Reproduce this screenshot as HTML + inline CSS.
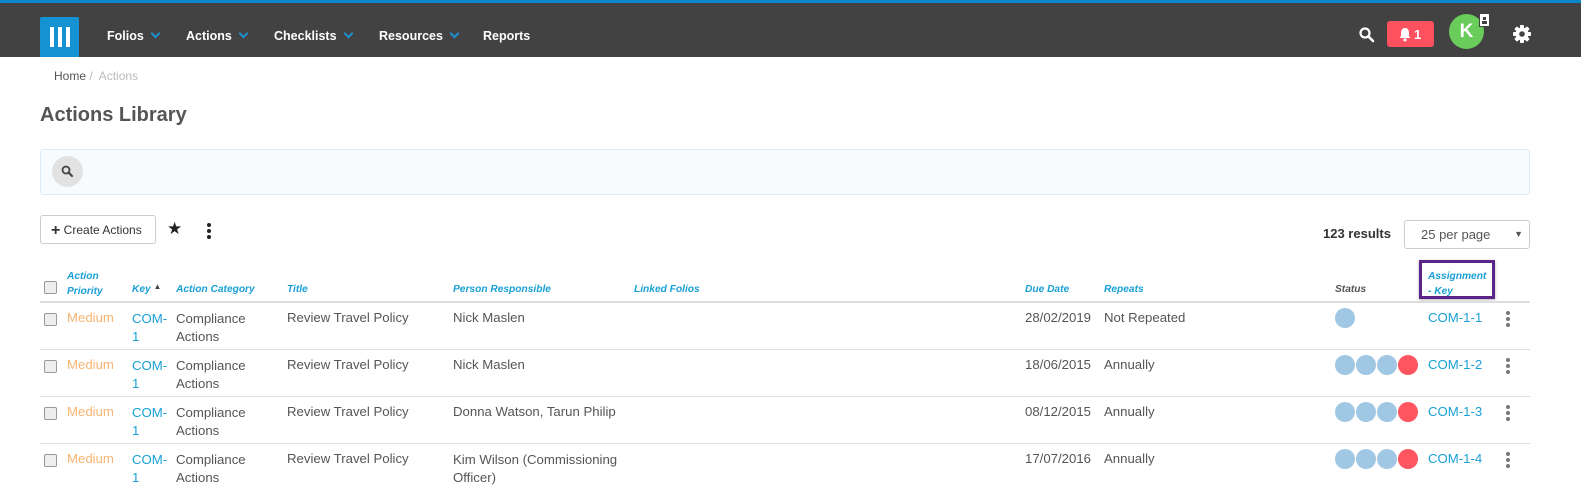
<!DOCTYPE html>
<html><head><meta charset="utf-8"><style>
*{box-sizing:border-box;margin:0;padding:0}
body{width:1581px;height:493px;overflow:hidden;background:#fff;font-family:"Liberation Sans",sans-serif;font-size:13px;color:#555;position:relative}
.a{position:absolute;white-space:nowrap}
.top{position:absolute;left:0;top:0;width:1581px;height:3px;background:#0a86c9}
.nav{position:absolute;left:0;top:3px;width:1581px;height:54px;background:#424242}
.logo{position:absolute;left:40px;top:17px;width:39px;height:40px;background:#1592d2;border-radius:2px 2px 0 0}
.logo i{position:absolute;top:10px;width:4px;height:20px;background:#fff}
.ni{color:#fff;font-weight:bold;font-size:12.5px;top:29px}
.chev{display:inline-block;width:7px;height:7px;border-right:2px solid #1e8fd0;border-bottom:2px solid #1e8fd0;transform:rotate(45deg);margin-left:8px;position:relative;top:-3px}
.h{color:#19a0d6;font-style:italic;font-weight:bold;font-size:10.2px}
.t{font-size:13.2px;color:#555}
.cb{position:absolute;left:44px;width:13px;height:13px;border:1px solid #999;border-radius:2px;background:#eee}
.line{position:absolute;left:40px;width:1490px;height:1px;background:#ddd}
.dot{position:absolute;width:20px;height:20px;border-radius:50%;background:#a0c7e4}
.red{background:#fe5561}
.kb{position:absolute;left:1506px;width:4px;height:4px;border-radius:50%;background:#777}
</style></head><body>
<div class="top"></div>
<div class="nav"></div>
<div class="logo"><i style="left:10px"></i><i style="left:18px"></i><i style="left:26px"></i></div>
<div class="a ni" style="left:107px">Folios<span class="chev"></span></div>
<div class="a ni" style="left:186px">Actions<span class="chev"></span></div>
<div class="a ni" style="left:274px">Checklists<span class="chev"></span></div>
<div class="a ni" style="left:379px">Resources<span class="chev"></span></div>
<div class="a ni" style="left:483px">Reports</div>
<svg class="a" style="left:1358px;top:26px" width="18" height="18" viewBox="0 0 18 18"><circle cx="7" cy="7" r="4.5" fill="none" stroke="#fff" stroke-width="2.2"/><line x1="10.5" y1="10.5" x2="15" y2="15" stroke="#fff" stroke-width="2.6" stroke-linecap="round"/></svg>
<div class="a" style="left:1387px;top:21px;width:47px;height:26px;background:#fd5160;border-radius:3px"></div>
<svg class="a" style="left:1398px;top:27px" width="14" height="15" viewBox="0 0 14 15"><path d="M7 1C4 1 3 3.5 3 6v3L1.5 11h11L11 9V6c0-2.5-1-5-4-5z" fill="#fff"/><circle cx="7" cy="12.8" r="1.6" fill="#fff"/></svg>
<div class="a" style="left:1414px;top:27px;color:#fff;font-weight:bold;font-size:13px">1</div>
<div class="a" style="left:1449px;top:14px;width:35px;height:35px;border-radius:50%;background:#6acd5b;color:#fff;font-weight:bold;font-size:19px;text-align:center;line-height:35px">K</div>
<div class="a" style="left:1479px;top:13px;width:11px;height:14px;background:#fff;border:1px solid #424242"><div style="position:absolute;left:3px;top:3px;width:3px;height:3px;background:#424242"></div><div style="position:absolute;left:2px;top:7px;width:5px;height:3px;background:#424242"></div></div>
<svg class="a" style="left:1512px;top:24px" width="20" height="20" viewBox="0 0 20 20"><g fill="#fff"><circle cx="10" cy="10" r="6.5"/><rect x="8" y="1" width="4" height="18" rx="1"/><rect x="8" y="1" width="4" height="18" rx="1" transform="rotate(45 10 10)"/><rect x="8" y="1" width="4" height="18" rx="1" transform="rotate(90 10 10)"/><rect x="8" y="1" width="4" height="18" rx="1" transform="rotate(135 10 10)"/></g><circle cx="10" cy="10" r="2.8" fill="#424242"/></svg>

<div class="a" style="left:54px;top:69px;font-size:12px;color:#555">Home <span style="color:#bbb">/&nbsp; Actions</span></div>
<div class="a" style="left:40px;top:104px;font-size:20px;font-weight:bold;color:#555">Actions Library</div>

<div class="a" style="left:40px;top:149px;width:1490px;height:46px;background:#f7fbfe;border:1px solid #dde9f4;border-radius:3px"></div>
<div class="a" style="left:52px;top:156px;width:31px;height:31px;border-radius:50%;background:#e2e2e2"></div>
<svg class="a" style="left:61px;top:165px" width="13" height="13" viewBox="0 0 13 13"><circle cx="5" cy="5" r="3.5" fill="none" stroke="#444" stroke-width="1.8"/><line x1="7.7" y1="7.7" x2="11" y2="11" stroke="#444" stroke-width="2.2" stroke-linecap="round"/></svg>

<div class="a" style="left:40px;top:215px;width:116px;height:29px;border:1px solid #ccc;border-radius:3px;font-size:12px;color:#333;line-height:27px;padding-left:10px"><b style="font-size:16px;position:relative;top:1px">+</b> Create Actions</div>
<div class="a" style="left:167px;top:219px;font-size:17px;color:#222">★</div>
<div class="a" style="left:207px;top:223px;width:4px;height:4px;border-radius:50%;background:#222"></div>
<div class="a" style="left:207px;top:229px;width:4px;height:4px;border-radius:50%;background:#222"></div>
<div class="a" style="left:207px;top:235px;width:4px;height:4px;border-radius:50%;background:#222"></div>
<div class="a" style="left:1323px;top:226px;font-size:13px;font-weight:bold;color:#333">123 results</div>
<div class="a" style="left:1404px;top:220px;width:126px;height:29px;border:1px solid #ccc;border-radius:3px;font-size:13px;color:#555;line-height:27px;padding-left:16px">25 per page<span style="position:absolute;right:6px;font-size:9px;color:#555">▼</span></div>

<div class="cb" style="top:281px"></div>
<div class="a h" style="left:67px;top:269px;line-height:15px">Action<br>Priority</div>
<div class="a h" style="left:132px;top:284px">Key <span style="font-style:normal;font-size:8px;color:#444;position:relative;top:-3px">▲</span></div>
<div class="a h" style="left:176px;top:284px">Action Category</div>
<div class="a h" style="left:287px;top:284px">Title</div>
<div class="a h" style="left:453px;top:284px">Person Responsible</div>
<div class="a h" style="left:634px;top:284px">Linked Folios</div>
<div class="a h" style="left:1025px;top:284px">Due Date</div>
<div class="a h" style="left:1104px;top:284px">Repeats</div>
<div class="a h" style="left:1335px;top:284px;color:#555">Status</div>
<div class="a" style="left:1419px;top:260px;width:76px;height:39px;border:3px solid #5b2587;box-shadow:0 1px 3px rgba(0,0,0,.3)"></div>
<div class="a h" style="left:1428px;top:269px;line-height:15px">Assignment<br>- Key</div>
<div class="line" style="top:301px;height:2px"></div>

<div class="line" style="top:349px"></div>
<div class="line" style="top:396px"></div>
<div class="line" style="top:443px"></div>

<div class="cb" style="top:313px"></div>
<div class="a t" style="left:67px;top:310px;color:#f8b472">Medium</div>
<div class="a t" style="left:132px;top:310px;color:#19a0d6;line-height:18px">COM-<br>1</div>
<div class="a t" style="left:176px;top:310px;line-height:18px">Compliance<br>Actions</div>
<div class="a t" style="left:287px;top:310px">Review Travel Policy</div>
<div class="a t" style="left:453px;top:310px">Nick Maslen</div>
<div class="a t" style="left:1025px;top:310px">28/02/2019</div>
<div class="a t" style="left:1104px;top:310px">Not Repeated</div>
<div class="dot" style="left:1335px;top:308px"></div>
<div class="a t" style="left:1428px;top:310px;color:#19a0d6">COM-1-1</div>
<div class="kb" style="top:311px"></div><div class="kb" style="top:317px"></div><div class="kb" style="top:323px"></div>

<div class="cb" style="top:360px"></div>
<div class="a t" style="left:67px;top:357px;color:#f8b472">Medium</div>
<div class="a t" style="left:132px;top:357px;color:#19a0d6;line-height:18px">COM-<br>1</div>
<div class="a t" style="left:176px;top:357px;line-height:18px">Compliance<br>Actions</div>
<div class="a t" style="left:287px;top:357px">Review Travel Policy</div>
<div class="a t" style="left:453px;top:357px">Nick Maslen</div>
<div class="a t" style="left:1025px;top:357px">18/06/2015</div>
<div class="a t" style="left:1104px;top:357px">Annually</div>
<div class="dot" style="left:1335px;top:355px"></div><div class="dot" style="left:1356px;top:355px"></div><div class="dot" style="left:1377px;top:355px"></div><div class="dot red" style="left:1398px;top:355px"></div>
<div class="a t" style="left:1428px;top:357px;color:#19a0d6">COM-1-2</div>
<div class="kb" style="top:358px"></div><div class="kb" style="top:364px"></div><div class="kb" style="top:370px"></div>

<div class="cb" style="top:407px"></div>
<div class="a t" style="left:67px;top:404px;color:#f8b472">Medium</div>
<div class="a t" style="left:132px;top:404px;color:#19a0d6;line-height:18px">COM-<br>1</div>
<div class="a t" style="left:176px;top:404px;line-height:18px">Compliance<br>Actions</div>
<div class="a t" style="left:287px;top:404px">Review Travel Policy</div>
<div class="a t" style="left:453px;top:404px">Donna Watson, Tarun Philip</div>
<div class="a t" style="left:1025px;top:404px">08/12/2015</div>
<div class="a t" style="left:1104px;top:404px">Annually</div>
<div class="dot" style="left:1335px;top:402px"></div><div class="dot" style="left:1356px;top:402px"></div><div class="dot" style="left:1377px;top:402px"></div><div class="dot red" style="left:1398px;top:402px"></div>
<div class="a t" style="left:1428px;top:404px;color:#19a0d6">COM-1-3</div>
<div class="kb" style="top:405px"></div><div class="kb" style="top:411px"></div><div class="kb" style="top:417px"></div>

<div class="cb" style="top:454px"></div>
<div class="a t" style="left:67px;top:451px;color:#f8b472">Medium</div>
<div class="a t" style="left:132px;top:451px;color:#19a0d6;line-height:18px">COM-<br>1</div>
<div class="a t" style="left:176px;top:451px;line-height:18px">Compliance<br>Actions</div>
<div class="a t" style="left:287px;top:451px">Review Travel Policy</div>
<div class="a t" style="left:453px;top:451px;line-height:18px">Kim Wilson (Commissioning<br>Officer)</div>
<div class="a t" style="left:1025px;top:451px">17/07/2016</div>
<div class="a t" style="left:1104px;top:451px">Annually</div>
<div class="dot" style="left:1335px;top:449px"></div><div class="dot" style="left:1356px;top:449px"></div><div class="dot" style="left:1377px;top:449px"></div><div class="dot red" style="left:1398px;top:449px"></div>
<div class="a t" style="left:1428px;top:451px;color:#19a0d6">COM-1-4</div>
<div class="kb" style="top:452px"></div><div class="kb" style="top:458px"></div><div class="kb" style="top:464px"></div>
</body></html>
